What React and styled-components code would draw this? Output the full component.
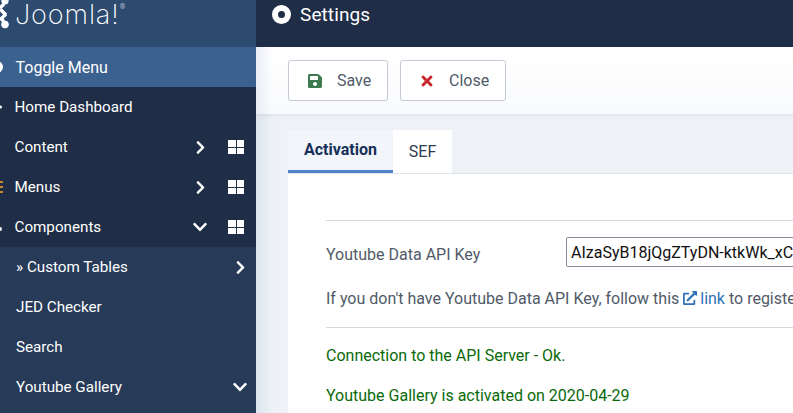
import React from "react";
import styled, { createGlobalStyle } from "styled-components";
import { FaSave, FaTimes, FaExternalLinkAlt, FaChevronRight, FaChevronDown } from "react-icons/fa";

const Global = createGlobalStyle`
	html, body {
		margin: 0;
		height: 100%;
		overflow: hidden;
		background: #eef2f6;
		font-family: Roboto, "Liberation Sans", sans-serif;
	}
`;

const Page = styled.div`
	display: flex;
	width: 793px;
	height: 413px;
	overflow: hidden;
`;

const Sidebar = styled.aside`
	width: 256px;
	flex: none;
	background: #1f2e46;
	overflow: hidden;
	display: flex;
	flex-direction: column;
`;

const Brand = styled.div`
	height: 47px;
	flex: none;
	background: #2d4a6f;
	display: flex;
	align-items: flex-start;
`;

const LogoMark = styled.svg`
	width: 9px;
	height: 29px;
	flex: none;
	margin-right: 6px;
`;

const LogoText = styled.span`
	font-family: Inter, Lato, sans-serif;
	font-weight: 200;
	font-size: 27px;
	line-height: 30px;
	color: #fff;
	letter-spacing: 0.9px;
`;

const Reg = styled.span`
	font-size: 7px;
	line-height: 7px;
	margin-top: 4px;
	color: #b9c6d6;
`;

const Row = styled.div`
	height: 40px;
	flex: none;
	display: flex;
	align-items: center;
	color: #fff;
	font-size: 15.2px;
	padding-left: ${(p) => (p.$sub ? "16px" : "14.5px")};
	background: ${(p) => (p.$toggle ? "#3b618f" : "transparent")};
	position: relative;
`;

const SubMenu = styled.div`
	flex: 1;
	background: #273b59;
`;

const Label = styled.span`
	flex: 1;
	font-size: ${(p) => (p.$big ? "16px" : "15.2px")};
	margin-left: ${(p) => (p.$big ? "1px" : "0")};
`;

const Bullet = styled.i`
	position: absolute;
	left: ${(p) => p.$left || 0}px;
	top: ${(p) => p.$top || 20}px;
	transform: translateY(-50%);
	display: block;
	width: ${(p) => p.$size || 3}px;
	height: ${(p) => p.$size || 3}px;
	background: #fff;
	border-radius: 50%;
`;

const Ring = styled.i`
	position: absolute;
	left: -9px;
	top: 50%;
	transform: translateY(-50%);
	width: 6px;
	height: 6px;
	border: 3px solid #fff;
	border-radius: 50%;
	display: block;
`;

const MenuLines = styled.i`
	position: absolute;
	left: 0;
	top: 50%;
	transform: translateY(-50%);
	display: block;
	width: 3px;
	height: 12px;
	background: repeating-linear-gradient(#c98a2c 0 2px, transparent 2px 5px);
`;

const Chevron = styled.span`
	width: 22px;
	display: flex;
	justify-content: center;
	margin-right: ${(p) => (p.$sub ? "5px" : "17px")};
	font-size: ${(p) => (p.$down ? "16px" : "15px")};
`;

const Tiles = styled.span`
	display: grid;
	grid-template-columns: 7.5px 7.5px;
	grid-auto-rows: 6.5px;
	gap: 1px;
	margin-right: 12px;

	i {
		background: #fff;
		display: block;
	}
`;

const Main = styled.main`
	flex: 1;
	min-width: 0;
	display: flex;
	flex-direction: column;
`;

const TopBar = styled.header`
	height: 47px;
	flex: none;
	background: #1f2e46;
	color: #fff;
	display: flex;
	align-items: flex-start;
	padding: 5px 0 0 16px;
	box-sizing: border-box;
	font-size: 19px;
	gap: 9px;
`;

const TitleIcon = styled.span`
	width: 7px;
	height: 7px;
	border: 6px solid #fff;
	border-radius: 50%;
	background: #1f2e46;
	flex: none;
`;

const Title = styled.span`
	line-height: 20px;
	letter-spacing: 0.1px;
`;

const Toolbar = styled.div`
	height: 67px;
	flex: none;
	box-sizing: border-box;
	background: linear-gradient(90deg, #e9eef5, rgba(255, 255, 255, 0) 16px), linear-gradient(#fff, #f9fafc);
	box-shadow: 0 1px 4px rgba(60, 80, 110, 0.12);
	padding: 13px 32px;
	display: flex;
	gap: 12px;
	position: relative;
`;

const ToolButton = styled.button`
	height: 41px;
	width: ${(p) => p.$w}px;
	box-sizing: border-box;
	background: #fff;
	border: 1px solid #c3cad6;
	border-radius: 3px;
	display: flex;
	align-items: center;
	font: 400 16px Roboto, sans-serif;
	color: #505a68;
	padding: 0 0 0 18px;
	gap: 14px;

	svg {
		color: ${(p) => p.$icon};
		font-size: 16px;
		flex: none;
	}
`;

const Content = styled.div`
	flex: 1;
	padding: 16px 0 0 32px;
	background: linear-gradient(90deg, #dbe4ef, #eef2f6 18px);
`;

const Tabs = styled.div`
	display: flex;
	height: 43px;
`;

const Tab = styled.div`
	height: 43px;
	box-sizing: border-box;
	display: flex;
	align-items: center;
	justify-content: center;
	width: ${(p) => p.$w}px;
	font-size: 16px;
	padding-bottom: 1px;
	background: ${(p) => (p.$active ? "#f2f5f9" : "#fff")};
	color: ${(p) => (p.$active ? "#16305a" : "#2d3a4e")};
	font-weight: ${(p) => (p.$active ? 700 : 400)};
	border-bottom: ${(p) => (p.$active ? "3px solid #4f82c6" : "none")};
`;

const Panel = styled.section`
	background: #fff;
	border-top: 1px solid #dfe5ec;
	padding: 46px 0 0 38px;
	white-space: nowrap;
	overflow: hidden;
	height: 240px;
	font-size: 16px;
	color: #505a68;
`;

const Rule = styled.hr`
	border: 0;
	border-top: 1px solid #d5d8dc;
	margin: 0;
`;

const Field = styled.div`
	display: flex;
	align-items: center;
	margin-top: 16px;
	height: 30px;
`;

const FieldLabel = styled.label`
	width: 240px;
	flex: none;
	padding-top: 4px;
`;

const KeyInput = styled.input`
	width: 300px;
	height: 30px;
	flex: none;
	box-sizing: border-box;
	border: 1px solid #8a8d99;
	border-radius: 2px;
	padding: 0 4px;
	font: 400 16px Roboto, sans-serif;
	color: #111;
	outline: none;
`;

const Help = styled.p`
	margin: 20px 0 16px;
	line-height: 24px;
	height: 24px;
`;

const DocLink = styled.a`
	color: #2f72b8;
	text-decoration: none;

	svg {
		font-size: 14px;
		vertical-align: -1px;
		margin-right: 3px;
	}
`;

const Status = styled.p`
	margin: ${(p) => (p.$first ? "16px" : "0")} 0 16px;
	line-height: 24px;
	color: #0a6a0a;
`;

const Tile = () => (
	<Tiles>
		<i />
		<i />
		<i />
		<i />
	</Tiles>
);

export default function App() {
	return (
		<Page>
			<Global />
			<Sidebar>
				<Brand>
					<LogoMark viewBox="0 0 9 29">
						<g fill="#fff" stroke="#fff">
							<circle cx="5" cy="1" r="3.2" />
							<circle cx="5" cy="24.5" r="3.4" />
							<path d="M4 4 L0 8 M0 9 L6 15 M6 14 L0 20 M2 19 L5 24" strokeWidth="3.4" fill="none" />
						</g>
					</LogoMark>
					<LogoText>Joomla!</LogoText>
					<Reg>®</Reg>
				</Brand>
				<Row $toggle>
					<Ring />
					<Label $big>Toggle Menu</Label>
				</Row>
				<Row>
					<Bullet $left={-1} />
					<Label>Home Dashboard</Label>
				</Row>
				<Row>
					<Label>Content</Label>
					<Chevron><FaChevronRight /></Chevron>
					<Tile />
				</Row>
				<Row>
					<MenuLines />
					<Label>Menus</Label>
					<Chevron><FaChevronRight /></Chevron>
					<Tile />
				</Row>
				<Row>
					<Bullet $left={-2} $size={4} $top={22} />
					<Label>Components</Label>
					<Chevron $down><FaChevronDown /></Chevron>
					<Tile />
				</Row>
				<SubMenu>
					<Row $sub>
						<Label>» Custom Tables</Label>
						<Chevron $sub><FaChevronRight /></Chevron>
					</Row>
					<Row $sub><Label>JED Checker</Label></Row>
					<Row $sub><Label>Search</Label></Row>
					<Row $sub>
						<Label>Youtube Gallery</Label>
						<Chevron $sub $down><FaChevronDown /></Chevron>
					</Row>
				</SubMenu>
			</Sidebar>
			<Main>
				<TopBar>
					<TitleIcon />
					<Title>Settings</Title>
				</TopBar>
				<Toolbar>
					<ToolButton $w={100} $icon="#3d7a50"><FaSave />Save</ToolButton>
					<ToolButton $w={106} $icon="#c9252c"><FaTimes />Close</ToolButton>
				</Toolbar>
				<Content>
					<Tabs>
						<Tab $active $w={105}>Activation</Tab>
						<Tab $w={59}>SEF</Tab>
					</Tabs>
					<Panel>
						<Rule />
						<Field>
							<FieldLabel>Youtube Data API Key</FieldLabel>
							<KeyInput readOnly value="AIzaSyB18jQgZTyDN-ktkWk_xCz3sTqHn8vLpQe0" />
						</Field>
						<Help>
							If you don't have Youtube Data API Key, follow this{" "}
							<DocLink href="#"><FaExternalLinkAlt />link</DocLink> to register
						</Help>
						<Rule />
						<Status $first>Connection to the API Server - Ok.</Status>
						<Status>Youtube Gallery is activated on 2020-04-29</Status>
					</Panel>
				</Content>
			</Main>
		</Page>
	);
}
